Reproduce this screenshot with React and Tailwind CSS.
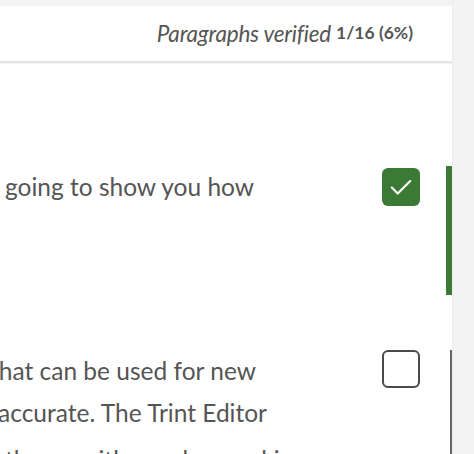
export default function App() {
  return (
    <div className="w-[474px] h-[454px] overflow-hidden bg-[#f3f3f3] flex" style={{ fontFamily: "Lato, 'Open Sans', sans-serif" }}>
      <div className="w-[452px] shrink-0 mt-[6px] bg-white flex flex-col">
        <header className="h-[57px] shrink-0 flex items-center justify-end pr-[39px] border-b-2 border-[#e4e4e4] shadow-[0_1px_1px_rgba(0,0,0,0.04)]">
          <span className="text-[22.5px] italic text-[#555] tracking-[-0.2px]">Paragraphs verified</span>
          <span className="ml-[5px] text-[17.5px] font-bold text-[#555]">1/16 (6%)</span>
        </header>

        <div className="flex-1 overflow-hidden">
          <div className="mt-[103px] h-[130px] flex">
            <div className="flex-1 overflow-hidden text-[24.5px] leading-[42px] text-[#555] pl-[5px] whitespace-nowrap">
              going to show you how
            </div>
            <div className="w-[38px] h-[38px] mt-[2px] rounded-[6px] bg-[#3b7a35] flex items-center justify-center">
              <svg width="26" height="26" viewBox="0 0 24 24" fill="none" stroke="white" strokeWidth="2" strokeLinecap="round" strokeLinejoin="round">
                <path d="M3.5 12.5l5.5 5.5L20.5 6.5" />
              </svg>
            </div>
            <div className="w-[32px] flex justify-end">
              <div className="w-[6px] h-[129px] bg-[#3b7a35]" />
            </div>
          </div>

          <div className="mt-[54px] flex">
            <div className="flex-1 overflow-hidden text-[24.5px] leading-[42px] text-[#555] whitespace-nowrap">
              <div className="ml-[-10px]">that can be used for new</div>
              <div className="ml-[-2px]">accurate. The Trint Editor</div>
              <div className="pl-[5px] mt-[5px]">theme with us when making</div>
            </div>
            <div className="w-[38px] h-[38px] rounded-[6px] border-2 border-[#4a4a4a] bg-white" />
            <div className="w-[32px] flex justify-end">
              <div className="w-[2px] h-[120px] bg-[#666]" />
            </div>
          </div>
        </div>
      </div>
      <div className="flex-1 border-l border-[#ececec]" />
    </div>
  );
}
